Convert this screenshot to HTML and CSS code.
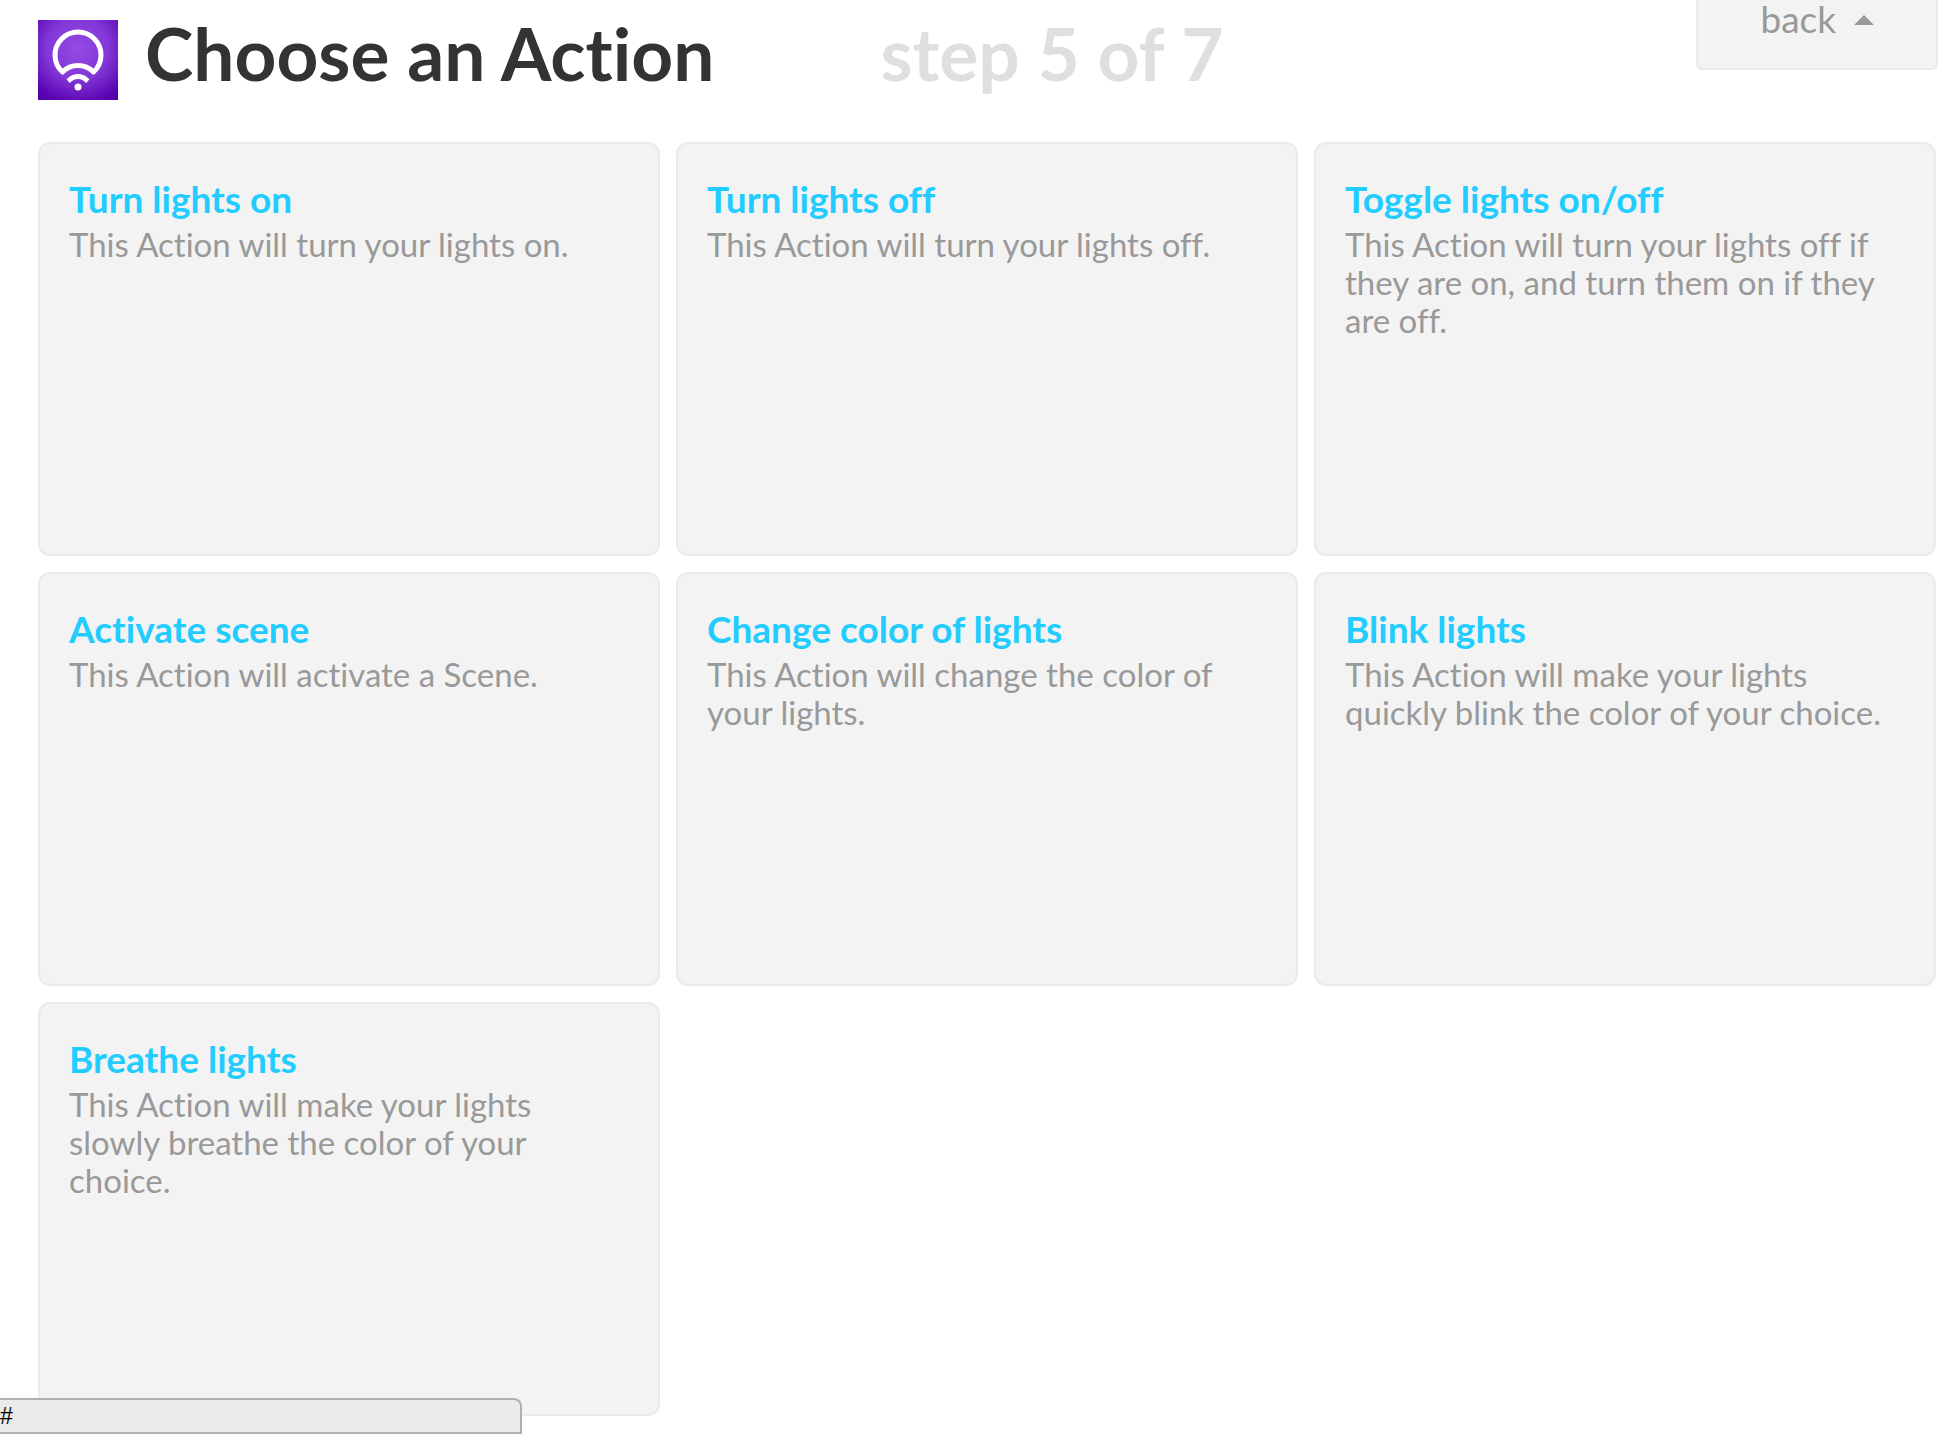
FILE: index.html
```html
<!DOCTYPE html>
<html lang="en">
  <head>
    <title>Choose an Action</title>
    <meta charset="utf-8" />
    <link rel="stylesheet" href="styles.css">
  </head>
  <body>
    <header class="header">
      <svg class="logo" viewBox="0 0 80 80" role="img" aria-label="LIFX">
        <defs>
          <radialGradient id="logo-bg" cx="50%" cy="36%" r="86%">
            <stop offset="0" stop-color="#944ae6" />
            <stop offset="0.45" stop-color="#8237d6" />
            <stop offset="0.8" stop-color="#5a04b3" />
            <stop offset="1" stop-color="#48009c" />
          </radialGradient>
        </defs>
        <rect width="80" height="80" fill="url(#logo-bg)" />
        <g fill="none" stroke="#fff" stroke-width="5" stroke-linejoin="round">
          <path d="M24.5 52A23 23 0 1 1 55.5 52A22 22 0 0 0 24.5 52Z" />
          <path d="M32 59.5A12 12 0 0 1 48 59.5" stroke-linecap="square" />
        </g>
        <circle cx="40" cy="67" r="3.5" fill="#fff" />
      </svg>
      <h1 class="title">Choose an Action</h1>
      <span class="step">step 5 of 7</span>
      <button class="back" type="button">back <span class="arrow"></span></button>
    </header>

    <main class="actions">
      <a class="card" href="#">
        <h2>Turn lights on</h2>
        <p>This Action will turn your lights on.</p>
      </a>
      <a class="card" href="#">
        <h2>Turn lights off</h2>
        <p>This Action will turn your lights off.</p>
      </a>
      <a class="card" href="#">
        <h2>Toggle lights on/off</h2>
        <p>This Action will turn your lights off if they are on, and turn them on if they are off.</p>
      </a>
      <a class="card" href="#">
        <h2>Activate scene</h2>
        <p>This Action will activate a Scene.</p>
      </a>
      <a class="card" href="#">
        <h2>Change color of lights</h2>
        <p>This Action will change the color of your lights.</p>
      </a>
      <a class="card" href="#">
        <h2>Blink lights</h2>
        <p>This Action will make your lights quickly blink the color of your choice.</p>
      </a>
      <a class="card" href="#">
        <h2>Breathe lights</h2>
        <p>This Action will make your lights slowly breathe the color of your choice.</p>
      </a>
    </main>

    <div class="status">#</div>
  </body>
</html>
```

FILE: styles.css
```css
* {
  box-sizing: border-box;
}
body {
  margin: 0;
  padding: 0 16px 16px 38px;
  background: #fff;
  color: #333;
  font-family: Lato, "Open Sans", sans-serif;
  font-variant-ligatures: none;
}
.header {
  display: flex;
  align-items: flex-start;
  min-height: 142px;
}
.logo {
  width: 80px;
  height: 80px;
  margin-top: 20px;
}
.title, .step {
  margin: 10px 0 0 27px;
  font-size: 73px;
  font-weight: bold;
  line-height: 86px;
  white-space: nowrap;
}
.step {
  margin-left: 166px;
  color: #dfdfdf;
}
.back {
  width: 242px;
  height: 70px;
  margin: 0 -2px 0 auto;
  padding: 0 0 30px;
  border: 2px solid #eaeaea;
  border-top: 0;
  border-radius: 0 0 6px 6px;
  background: #f3f3f3;
  color: #999;
  font-family: inherit;
  font-size: 37px;
  line-height: 38px;
}
.arrow {
  display: inline-block;
  margin-left: 8px;
  border: 10px solid transparent;
  border-top: 0;
  border-bottom-color: #999;
  vertical-align: 8px;
}
.actions {
  display: grid;
  grid-template-columns: repeat(3, 1fr);
  grid-auto-rows: minmax(414px, auto);
  gap: 16px;
}
.card {
  padding: 35px 44px 35px 29px;
  border: 2px solid #eaeaea;
  border-radius: 12px;
  background: #f3f3f3;
  color: #999;
  text-decoration: none;
}
.card h2 {
  margin: 0 0 6px;
  color: #2cf;
  font-size: 37px;
  line-height: 40px;
}
.card p {
  margin: 0;
  font-size: 33px;
  line-height: 38px;
}
/* browser status bar over the page corner */
.status {
  position: fixed;
  left: 0;
  bottom: 0;
  width: 522px;
  height: 36px;
  border: 2px solid #b0b0b0;
  border-left: 0;
  border-top-right-radius: 8px;
  background: #eaeaea;
  color: #000;
  font-family: "Liberation Sans", sans-serif;
  font-size: 23px;
  line-height: 33px;
}
```
